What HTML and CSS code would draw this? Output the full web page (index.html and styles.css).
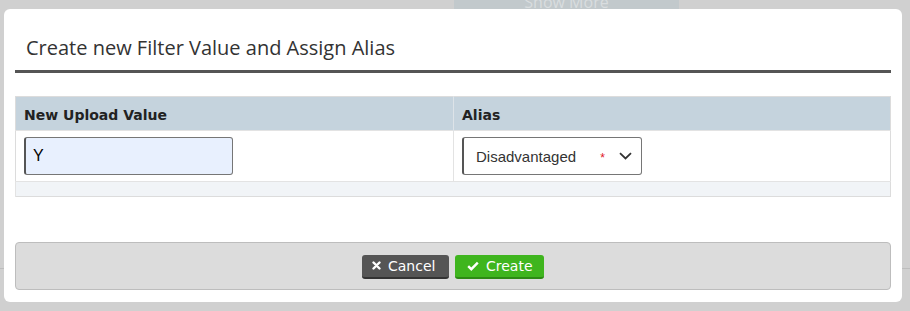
FILE: index.html
```html
<!DOCTYPE html>
<html>
<head>
<meta charset="utf-8">
<link rel="stylesheet" href="styles.css">
</head>
<body>
<div class="page">
  <div class="page-top"><div class="show-more"><span class="show-more-label">Show More</span></div></div>
  <div class="page-rule"></div>
</div>
<div class="modal">
  <div class="modal-header">
    <h2 class="modal-title">Create new Filter Value and Assign Alias</h2>
  </div>
  <div class="modal-body">
    <table class="grid">
      <thead>
        <tr><th class="col-a">New Upload Value</th><th>Alias</th></tr>
      </thead>
      <tbody>
        <tr>
          <td class="col-a"><input class="text-input" type="text" value="Y"></td>
          <td>
            <div class="select">
              <span class="select-value">Disadvantaged</span>
              <span class="req">*</span>
              <svg class="chev" width="13" height="8" viewBox="0 0 13 8"><path d="M1 1.2 L6.5 6.4 L12 1.2" fill="none" stroke="#333" stroke-width="1.8"/></svg>
            </div>
          </td>
        </tr>
      </tbody>
      <tfoot>
        <tr><td colspan="2" class="foot-cell"></td></tr>
      </tfoot>
    </table>
  </div>
  <div class="modal-footer">
    <button class="btn btn-cancel"><svg width="9" height="9" viewBox="0 0 9 9"><path d="M1.5 1.5 L7.5 7.5 M7.5 1.5 L1.5 7.5" stroke="#fff" stroke-width="2.4" stroke-linecap="round"/></svg>Cancel</button>
    <button class="btn btn-create"><svg width="12" height="10" viewBox="0 0 12 10"><path d="M1.2 5.2 L4.3 8.2 L10.8 1.6" fill="none" stroke="#fff" stroke-width="2.4"/></svg>Create</button>
  </div>
</div>
</body>
</html>
```

FILE: styles.css
```css
html, body {
  margin: 0;
  padding: 0;
  width: 910px;
  height: 311px;
  overflow: hidden;
  background: #d0d0d0;
  font-family: "DejaVu Sans", Verdana, sans-serif;
}
.page {
  display: flex;
  flex-direction: column;
}
.page-top {
  display: flex;
  padding-left: 454px;
}
.show-more {
  width: 225px;
  height: 9px;
  overflow: hidden;
  background: #c2c9cc;
  text-align: center;
}
.show-more-label {
  display: block;
  margin-top: -3px;
  color: #d9dddf;
  font-family: "Open Sans", sans-serif;
  font-size: 16px;
  line-height: 10px;
}
.page-rule {
  margin-top: 259px;
  height: 1px;
  background: #bdbdbd;
}
.modal {
  position: absolute;
  left: 4px;
  top: 9px;
  width: 898px;
  height: 293px;
  background: #fff;
  border-radius: 6px;
  box-sizing: border-box;
  padding: 0 11px;
  display: flex;
  flex-direction: column;
}
.modal-header {
  padding: 26px 0 9px 11px;
  border-bottom: 3px solid #555;
}
.modal-title {
  margin: 0;
  font-family: "Open Sans", sans-serif;
  font-size: 20px;
  line-height: 26px;
  font-weight: 400;
  color: #333;
}
.modal-body {
  padding-top: 23px;
}
.grid {
  width: 100%;
  border-collapse: collapse;
  border: 1px solid #dcdcdc;
}
.grid th {
  background: #c5d3dd;
  text-align: left;
  font-family: "DejaVu Sans", Verdana, sans-serif;
  font-size: 14px;
  font-weight: 700;
  color: #222;
  height: 34px;
  padding: 2px 8px 0;
  box-sizing: border-box;
  border-left: 1px solid #dde3e8;
}
.grid td {
  height: 51px;
  padding: 0 8px;
  box-sizing: border-box;
  border-left: 1px solid #e3e3e3;
  border-top: 1px solid #e3e3e3;
}
.grid .col-a {
  width: 438px;
  border-left: none;
}
.grid td.foot-cell {
  height: 15px;
  background: #f1f4f7;
  border-top: 1px solid #e3e3e3;
}
.text-input {
  display: block;
  width: 209px;
  height: 38px;
  box-sizing: border-box;
  border: 1px solid #767676;
  border-left: 2px solid #555;
  border-radius: 3px;
  background: #e8f0fe;
  font-family: "Liberation Sans", Arial, sans-serif;
  font-size: 16px;
  color: #000;
  padding: 0 0 0 7px;
  outline: none;
}
.select {
  width: 180px;
  height: 38px;
  box-sizing: border-box;
  border: 1px solid #767676;
  border-left: 2px solid #555;
  border-radius: 3px;
  background: #fff;
  display: flex;
  align-items: center;
  padding: 0 9px 0 12px;
}
.select-value {
  font-family: "Liberation Sans", Arial, sans-serif;
  font-size: 15px;
  color: #333;
  flex: 1;
}
.req {
  color: #e0141e;
  font-family: "Liberation Sans", Arial, sans-serif;
  font-size: 12px;
  margin-right: 14px;
  line-height: 1;
  margin-top: 3px;
}
.chev {
  display: block;
}
.modal-footer {
  margin-top: 45px;
  height: 48px;
  box-sizing: border-box;
  background: #dcdcdc;
  border: 1px solid #bdbdbd;
  border-radius: 4px;
  display: flex;
  justify-content: center;
  align-items: center;
  gap: 6px;
  padding-top: 1px;
}
.btn {
  height: 24px;
  box-sizing: border-box;
  border: none;
  border-radius: 3px;
  color: #fff;
  font-family: "DejaVu Sans", Verdana, sans-serif;
  font-size: 14px;
  line-height: 22px;
  display: flex;
  align-items: center;
  gap: 7px;
  padding: 0 10px;
}
.btn-cancel {
  width: 87px;
  background: #555;
  border-bottom: 2px solid #333;
}
.btn-create {
  width: 89px;
  background: #3fb51e;
  border-bottom: 2px solid #2d8a14;
  padding-left: 12px;
}
```
